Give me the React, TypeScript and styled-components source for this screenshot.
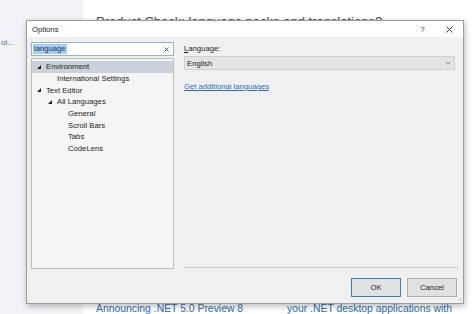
import React from 'react'
import styled, { createGlobalStyle } from 'styled-components'

const GlobalS = createGlobalStyle`
  html, body {
    margin: 0;
    padding: 0;
    width: 474px;
    height: 314px;
    overflow: hidden;
    background: #ffffff;
    font-family: "Liberation Sans", Arial, sans-serif;
  }
`;

const PageS = styled.div`
  position: relative;
  display: flex;
  width: 474px;
  height: 314px;
  overflow: hidden;
`;

const SidebarS = styled.aside`
  width: 83px;
  flex-shrink: 0;
  background: #f3f3f7;
  padding-top: 38px;
  box-sizing: border-box;

  span {
    display: block;
    padding-left: 1px;
    font-size: 8px;
    color: #3a6fb4;
  }
`;

const MainS = styled.main`
  flex: 1;
  display: flex;
  flex-direction: column;
  justify-content: space-between;
  padding-left: 13px;

  h1 {
    margin: 14px 0 0;
    font-size: 13px;
    font-weight: normal;
    color: #4a4a4a;
    white-space: nowrap;
  }
`;

const ArticlesS = styled.div`
  display: grid;
  grid-template-columns: 191px 1fr;
  margin-bottom: -1px;
  font-size: 10.4px;
  line-height: 13px;
  color: #2f6cb3;
  white-space: nowrap;
`;

const DialogS = styled.div`
  position: absolute;
  left: 26px;
  top: 20px;
  width: 436px;
  display: flex;
  flex-direction: column;
  background: #f0f0f0;
  border: 1px solid #9c9c9c;
  box-shadow: 1px 2px 6px rgba(0, 0, 0, 0.28);
  font-size: 7.7px;
  color: #1e1e1e;
`;

const TitleBarS = styled.div`
  height: 16px;
  display: flex;
  align-items: center;
  background: #ffffff;
  padding-left: 5px;

  .title {
    flex: 1;
    font-size: 7.7px;
    color: #222;
  }
`;

const TitleButtonS = styled.span`
  width: 27px;
  text-align: center;
  font-size: ${(p: { $size: number }) => p.$size}px;
  color: #333;
  display: flex;
  align-items: center;
  justify-content: center;
`;

const BodyS = styled.div`
  display: flex;
  gap: 10px;
  padding: 5px 5px 0 4px;
  height: 227px;
`;

const LeftColS = styled.div`
  width: 143px;
  display: flex;
  flex-direction: column;
  gap: 2px;
`;

const SearchS = styled.div`
  height: 14px;
  box-sizing: border-box;
  border: 1px solid #96b3d6;
  background: #ffffff;
  display: flex;
  align-items: center;
  padding: 0 4px 0 1px;

  .sel {
    background: #a7cdf1;
    color: #1b355c;
    padding: 0 1px;
    line-height: 10px;
  }

  .spacer {
    flex: 1;
  }
`;

const TreeS = styled.ul`
  flex: 1;
  margin: 0;
  list-style: none;
  box-sizing: border-box;
  border: 1px solid #bdbdbd;
  background: #f5f5f5;
  padding: 2px 0 0;
`;

const RowS = styled.li<{ $level: number; $selected?: boolean }>`
  height: 11.7px;
  display: flex;
  align-items: center;
  padding-left: ${(p) => 5 + p.$level * 11}px;
  background: ${(p) => (p.$selected ? '#cbd1da' : 'transparent')};
  white-space: nowrap;
`;

const ExpanderS = styled.span<{ $open?: boolean }>`
  width: 9px;
  flex-shrink: 0;
  display: flex;
  align-items: center;

  &::before {
    content: '';
    display: ${(p) => (p.$open ? 'block' : 'none')};
    width: 0;
    height: 0;
    border-bottom: 4px solid #1e1e1e;
    border-left: 4px solid transparent;
  }
`;

const RightColS = styled.div`
  flex: 1;
  display: flex;
  flex-direction: column;
  border-bottom: 1px solid #cacaca;
  margin-bottom: 1px;
  padding-top: 2px;

  label {
    height: 10px;
    line-height: 10px;
  }
`;

const ComboS = styled.div`
  margin-top: 2px;
  width: calc(100% - 3px);
  height: 14px;
  box-sizing: border-box;
  background: #e4e4e4;
  border: 1px solid #d0d0d0;
  display: flex;
  align-items: center;
  justify-content: space-between;
  padding: 0 3px 0 2px;
`;

const LinkS = styled.a`
  margin-top: 12px;
  color: #2b6cbf;
  text-decoration: underline;
  line-height: 10px;
`;

const FooterS = styled.div`
  display: flex;
  justify-content: flex-end;
  gap: 6px;
  padding: 9px 6px 6px 0;
  position: relative;
`;

const ButtonS = styled.button<{ $primary?: boolean }>`
  width: 50px;
  height: 19px;
  margin: 0;
  padding: 0;
  box-sizing: border-box;
  background: #e1e1e1;
  border: 1px solid ${(p) => (p.$primary ? '#3f7cb0' : '#adadad')};
  font-family: inherit;
  font-size: 7.7px;
  color: #1e1e1e;
`;

const GripS = styled.svg`
  position: absolute;
  right: 1px;
  bottom: 1px;
`;

type TNode = { label: string; level: number; open?: boolean; selected?: boolean };

const nodes: TNode[] = [
  { label: 'Environment', level: 0, open: true, selected: true },
  { label: 'International Settings', level: 1 },
  { label: 'Text Editor', level: 0, open: true },
  { label: 'All Languages', level: 1, open: true },
  { label: 'General', level: 2 },
  { label: 'Scroll Bars', level: 2 },
  { label: 'Tabs', level: 2 },
  { label: 'CodeLens', level: 2 },
];

export default function App() {
  return (
    <PageS>
      <GlobalS />
      <SidebarS>
        <span>ol...</span>
      </SidebarS>
      <MainS>
        <h1>Product Check: language packs and translations?</h1>
        <ArticlesS>
          <span>Announcing .NET 5.0 Preview 8</span>
          <span>your .NET desktop applications with</span>
        </ArticlesS>
      </MainS>

      <DialogS>
        <TitleBarS>
          <span className='title'>Options</span>
          <TitleButtonS $size={8}>?</TitleButtonS>
          <TitleButtonS $size={10}>
            <svg width='7' height='7' viewBox='0 0 7 7'>
              <path d='M0.5 0.5 L6.5 6.5 M6.5 0.5 L0.5 6.5' stroke='#333' strokeWidth='0.9' />
            </svg>
          </TitleButtonS>
        </TitleBarS>

        <BodyS>
          <LeftColS>
            <SearchS>
              <span className='sel'>language</span>
              <span className='spacer' />
              <svg width='5' height='5' viewBox='0 0 5 5'>
                <path d='M0.5 0.5 L4.5 4.5 M4.5 0.5 L0.5 4.5' stroke='#444' strokeWidth='0.9' />
              </svg>
            </SearchS>
            <TreeS>
              {nodes.map((n) => (
                <RowS key={n.label} $level={n.level} $selected={n.selected}>
                  <ExpanderS $open={n.open} />
                  {n.label}
                </RowS>
              ))}
            </TreeS>
          </LeftColS>

          <RightColS>
            <label><u>L</u>anguage:</label>
            <ComboS>
              <span>English</span>
              <svg width='6' height='4' viewBox='0 0 6 4'>
                <path d='M0.5 0.8 L3 3.2 L5.5 0.8' stroke='#777' strokeWidth='0.9' fill='none' />
              </svg>
            </ComboS>
            <LinkS>Get additional languages</LinkS>
          </RightColS>
        </BodyS>

        <FooterS>
          <ButtonS $primary>OK</ButtonS>
          <ButtonS>Cancel</ButtonS>
          <GripS width='5' height='5' viewBox='0 0 5 5'>
            <rect x='3.5' y='0.5' width='1' height='1' fill='#b5b5b5' />
            <rect x='1.5' y='2.5' width='1' height='1' fill='#b5b5b5' />
            <rect x='3.5' y='2.5' width='1' height='1' fill='#b5b5b5' />
          </GripS>
        </FooterS>
      </DialogS>
    </PageS>
  )
}
